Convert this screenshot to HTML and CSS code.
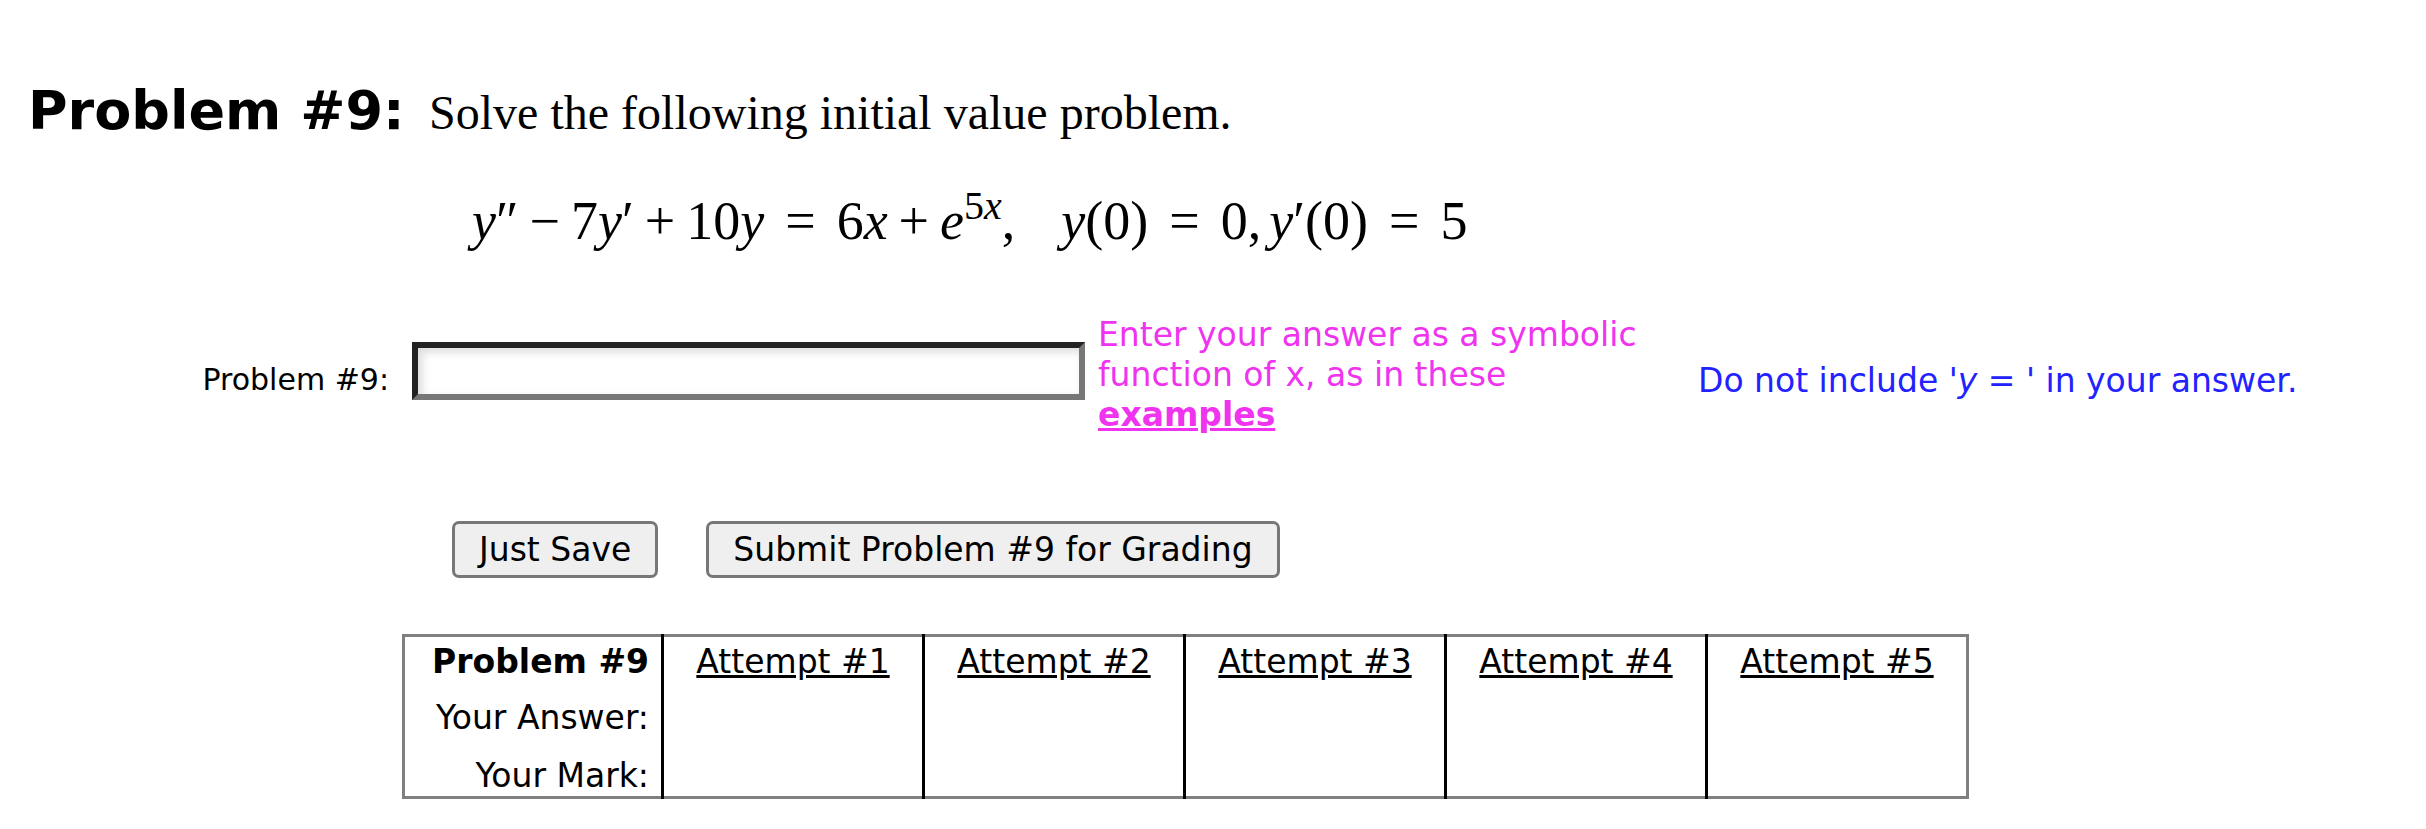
FILE: index.html
```html
<!DOCTYPE html>
<html lang="en">
<head>
  <meta charset="UTF-8" />
  <title>Problem #9</title>
  <link rel="stylesheet" href="styles.css">
</head>
<body>

  <div class="problem">
    <div class="title">
      <span class="num">Problem #9:</span>
      <span class="intro">Solve the following initial value problem.</span>
    </div>

    <div class="equation"><i>y</i>&#8243;<span class="op">&minus;</span>7<i>y</i>&#8242;<span class="op">+</span>10<i>y</i><span class="eq">=</span>6<i>x</i><span class="op">+</span><i>e</i><sup>5<i>x</i></sup>,<span class="quad"></span><i>y</i>(0)<span class="eq">=</span>0,<span class="thin"></span><i>y</i>&#8242;(0)<span class="eq">=</span>5</div>
  </div>

  <div class="answer-row">
    <label class="answer-label" for="answer">Problem #9:</label>
    <input type="text" id="answer" class="answer-box" />
    <div class="hint">
      Enter your answer as a symbolic function of x, as in these
      <a href="#" class="hint-link">examples</a>
    </div>
    <div class="note">Do not include '<i>y</i> = ' in your answer.</div>
  </div>

  <div class="buttons">
    <button type="button">Just Save</button>
    <button type="button">Submit Problem #9 for Grading</button>
  </div>

  <table class="attempts">
    <tr class="head-row">
      <th class="row-head">Problem #9</th>
      <td><a href="#">Attempt #1</a></td>
      <td><a href="#">Attempt #2</a></td>
      <td><a href="#">Attempt #3</a></td>
      <td><a href="#">Attempt #4</a></td>
      <td><a href="#">Attempt #5</a></td>
    </tr>
    <tr class="answer-line">
      <th>Your Answer:</th>
      <td></td><td></td><td></td><td></td><td></td>
    </tr>
    <tr class="mark-line">
      <th>Your Mark:</th>
      <td></td><td></td><td></td><td></td><td></td>
    </tr>
  </table>

</body>
</html>
```

FILE: styles.css
```css
body {
  margin: 0;
  font-family: "DejaVu Sans", Verdana, sans-serif;
  font-size: 33px;
  color: #000;
  background: #fff;
}

.problem {
  padding-top: 76px;
}

.title {
  margin-left: 28px;
  line-height: 70px;
}

.num {
  font-size: 54px;
  font-weight: bold;
  margin-right: 14px;
}

.intro {
  font-family: "Liberation Serif", "Times New Roman", serif;
  font-size: 48px;
}

.equation {
  margin-left: 472px;
  margin-top: 38px;
  font-family: "Liberation Serif", "Times New Roman", serif;
  font-size: 54px;
  line-height: 60px;
  white-space: nowrap;
}

.equation sup {
  font-size: 40px;
  line-height: 0;
  vertical-align: 0.5em;
}

.equation .op {
  margin: 0 11px;
}

.equation .eq {
  margin: 0 21px;
}

.equation .quad {
  display: inline-block;
  width: 46px;
}

.equation .thin {
  display: inline-block;
  width: 8px;
}

.answer-row {
  display: flex;
  align-items: center;
  margin-top: 56px;
  margin-left: 150px;
}

.answer-label {
  width: 239px;
  text-align: right;
  font-size: 30px;
  margin-right: 23px;
  margin-top: 16px;
}

.answer-box {
  width: 673px;
  height: 58px;
  box-sizing: border-box;
  border-width: 6px;
  border-style: solid;
  border-color: #222 #777 #777 #222;
  box-shadow: inset 0 8px 10px -4px #dcdcdc, inset 8px 0 10px -4px #dcdcdc;
  background: #fff;
  margin: 0;
}

.hint {
  width: 560px;
  margin-left: 13px;
  color: #ef33ef;
  line-height: 40px;
  margin-top: 8px;
}

.hint-link {
  color: #ef33ef;
  font-weight: bold;
}

.note {
  margin-left: 40px;
  color: #2222ff;
  margin-top: 18px;
}

.buttons {
  display: flex;
  gap: 48px;
  margin-top: 86px;
  margin-left: 452px;
}

.buttons button {
  font-family: "DejaVu Sans", Verdana, sans-serif;
  font-size: 33px;
  height: 57px;
  padding: 0 24px;
  background: #efefef;
  border: 3px solid #777;
  border-radius: 7px;
  color: #000;
}

.attempts {
  margin-top: 56px;
  margin-left: 402px;
  border-collapse: collapse;
  border: 3px solid #808080;
  table-layout: fixed;
}

.attempts tr {
  height: 54px;
}

.attempts th,
.attempts td {
  padding: 5px 8px 0;
  line-height: 40px;
  vertical-align: top;
  font-weight: normal;
}

.attempts .answer-line th {
  padding-top: 8px;
}

.attempts .mark-line th {
  padding-top: 12px;
}

.attempts th {
  width: 236px;
  text-align: right;
  padding-right: 12px;
}

.attempts th.row-head {
  font-weight: bold;
}

.attempts td {
  width: 242px;
  text-align: center;
  border-left: 3px solid #000;
}

.attempts a {
  color: #000;
}
```
